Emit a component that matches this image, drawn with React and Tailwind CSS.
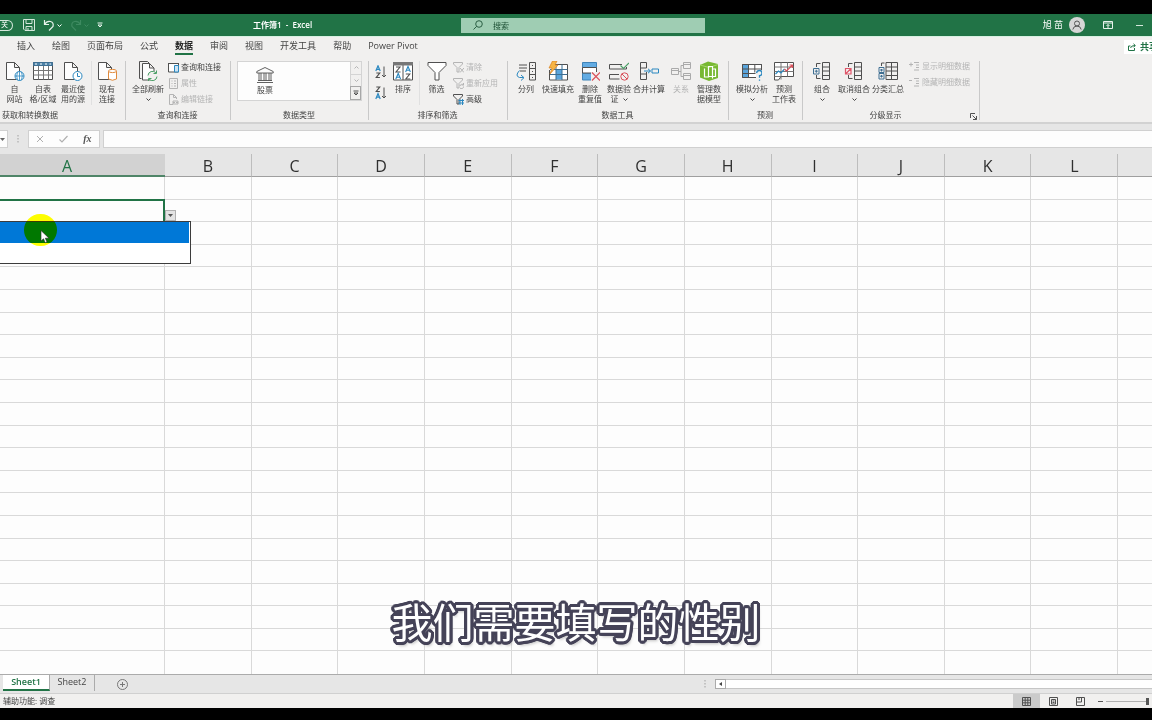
import React, { useState } from "react";
import clsx from "clsx";

const TABS = ["插入", "绘图", "页面布局", "公式", "数据", "审阅", "视图", "开发工具", "帮助", "Power Pivot"];
const COLUMNS = ["A", "B", "C", "D", "E", "F", "G", "H", "I", "J", "K", "L", ""];
const ROWS = 22;
const ROW_GRID = "grid grid-cols-[165px_repeat(11,87fr)_34fr]";

const INK = "#505050";
const BLUE = "#2b88c0";
const PALE = "#b4b4b4";

function Svg({ children, className = "w-5 h-5", box = "0 0 20 20", color = INK }) {
  return (
    <svg viewBox={box} className={clsx("shrink-0", className)} fill="none" stroke={color} strokeWidth="1" aria-hidden="true">
      {children}
    </svg>
  );
}

const Page = () => <path d="M1.5 1.5h8l5 5v12h-13z M9.5 1.5v5h5" fill="#fdfdfd" />;

const icons = {
  web: (
    <Svg>
      <Page />
      <circle cx="14.5" cy="15" r="4.5" fill="#fff" stroke={BLUE} />
      <path d="M10 15h9M14.5 10.5v9M12.5 11q-1.5 4 0 8M16.5 11q1.5 4 0 8" stroke={BLUE} strokeWidth=".8" />
    </Svg>
  ),
  table: (
    <Svg>
      <path d="M.5 1.5h19v17H.5z" fill="#fff" />
      <path d="M.5 1.5h19v3H.5z" fill="#4d83a8" stroke="#3f6f92" />
      <path d="M.5 9.5h19M.5 14h19M5.5 5v13.5M10.5 5v13.5M15.5 5v13.5" stroke="#777" />
      <path d="M2 3h2M7 3h2M12 3h2M16.5 3h1.5" stroke="#fff" />
    </Svg>
  ),
  recent: (
    <Svg>
      <Page />
      <circle cx="14.5" cy="15" r="4.5" fill="#fff" stroke={BLUE} />
      <path d="M14.5 12v3.5h2.5" stroke={BLUE} />
    </Svg>
  ),
  existing: (
    <Svg>
      <Page />
      <path d="M11.5 10v8q4 2.5 8 0v-8" fill="#fff" stroke="#e08a3c" />
      <ellipse cx="15.5" cy="10" rx="4" ry="1.6" fill="#fff" stroke="#e08a3c" />
    </Svg>
  ),
  refresh: (
    <Svg>
      <path d="M3.5 17.5h-2v-17h8l2 2" />
      <path d="M4.5 2.5h7l4.5 4.5v12h-11.5z M11.5 2.5v4.5h4.5" fill="#fdfdfd" />
      <circle cx="14.5" cy="15" r="5" fill="#f1f0ef" stroke="none" />
      <path d="M10 14.5a4.5 4.5 0 0 1 8-2.5M19 15.5a4.5 4.5 0 0 1-8 2.5M18.5 9.5v3h-3M10.5 20v-2.5h3" stroke="#4ba067" />
    </Svg>
  ),
  sort: (
    <Svg>
      <path d="M.5 1.5h19v17.5H.5zM10 4v15" fill="#fff" />
      <path d="M.5 1.5h19v2.5H.5z" fill="#777" stroke="#777" />
      <path d="M3 6h4l-4 5h4.5M12.8 13h4l-4 5h4.5" strokeWidth="1.1" />
      <path d="M2.8 18l2.4-5.5 2.4 5.5M3.7 16.3h3M12.6 11l2.4-5.5 2.4 5.5M13.5 9.3h3" stroke={BLUE} strokeWidth="1.1" />
    </Svg>
  ),
  filter: (
    <Svg>
      <path d="M1 1.5h18v3l-7 7v7.5H8v-7.5l-7-7z" fill="#fff" />
    </Svg>
  ),
  split: (
    <Svg>
      <path d="M3 4h8M3 7h8M4 10h6" />
      <path d="M13.5 1.5h6v17.5h-6zM13.5 7.5h6M13.5 13.5h6M16 4.5h1M16 10.5h1M16 16.5h1" />
      <path d="M3.5 9.5q-5 5.5 0 7h4M5 14l3 2.7-3 2.8" stroke={BLUE} />
    </Svg>
  ),
  flash: (
    <Svg>
      <path d="M4 3.5h15.5v15.5H1.5V9" fill="#fff" />
      <path d="M8 8h6v10.5H8z" fill="#5aa5dc" stroke="none" />
      <path d="M8 3.5v15.5M14 3.5v15.5M2 8.5h17.5M2 13.5h17.5" stroke="#3f6f92" />
      <path d="M4.5 0h4.5L7 4h3l-8 9 2-6H1z" fill="#f6b545" stroke="#d98020" strokeWidth=".7" />
    </Svg>
  ),
  dedupe: (
    <Svg>
      <path d="M2.5 1.5h14v5h-14zM2.5 12h14v7h-14z" fill="#63ace3" stroke="#3f83b8" />
      <path d="M2.5 6.5h14v5.500h-14z" fill="#fff" />
      <path d="M11 11h9v9h-9z" fill="#f1f0ef" stroke="none" />
      <path d="M12 11.500l8 8M20 11.500l-8 8" stroke="#d9505a" strokeWidth="1.2" />
    </Svg>
  ),
  validate: (
    <Svg>
      <path d="M13 3.5H.5v4.5h17v-2M10 13.5H.5V18h10" />
      <path d="M11.5 4.5l3 3L20 2" stroke="#4ba067" strokeWidth="1.2" />
      <circle cx="15.5" cy="15.5" r="3.7" stroke="#d9505a" />
      <path d="M13 13l5 5" stroke="#d9505a" />
    </Svg>
  ),
  consolidate: (
    <Svg>
      <path d="M1.5 1.5h6v5.5h-6zM1.5 7v11.5h6V13h-6M7.5 13V11" />
      <path d="M5 10h6.5M9 7.8l2.5 2.2L9 12.2M13 8h6.5v4H13z" stroke={BLUE} />
    </Svg>
  ),
  relation: (
    <Svg color="#aaa">
      <path d="M.5 7.5h7v6h-7zM12.5 1.5h7v6h-7zM12.5 12.5h7v6h-7zM7.5 10.5H10M12.5 4.5H10v11h2.5M.5 9.5h7M12.5 3.5h7M12.5 14.5h7" />
    </Svg>
  ),
  model: (
    <Svg>
      <path d="M1 4l8-3.500 10 2.500v14L10 20l-9-3.500z" fill="#78b833" stroke="none" />
      <path d="M1 4l9 2.5L19 3.5" stroke="#a6d86c" />
      <path d="M5.500 7.500v8.500h4V5.500h4v12M13.500 8h3v7.500H9.500" stroke="#fff" strokeWidth="1.2" />
    </Svg>
  ),
  whatif: (
    <Svg>
      <path d="M.5 3.5h19v13H.5z" fill="#fff" />
      <path d="M.5 3.5h6v13h-6z" fill="#5aa5dc" stroke="none" />
      <path d="M.5 3.5h19M.5 3.5v13h12M6.5 3.5v13M12.8 3.5v8M.5 8h19M.5 12.5h13M19.5 3.5v6" />
      <path d="M14 9h6.5v11H14z" fill="#f1f0ef" stroke="none" />
      <path d="M14.5 12q.5-2.5 3-2.5t2.5 2.5-2.5 2.7v2M17.5 18.500v1.3" stroke={BLUE} strokeWidth="1.3" />
    </Svg>
  ),
  forecast: (
    <Svg>
      <path d="M.5 1.5h19v14H7l-2.5 3.500H.5z" fill="#fff" />
      <path d="M.5 6h19M.5 10.5h19M7 1.5v14M13.5 1.5v14M.5 15.5H7v3" stroke="#777" />
      <path d="M1.5 13l3-3 2.5 2 3.5-4" stroke={BLUE} strokeWidth="1.2" />
      <path d="M10.5 8l2 2L18.5 4M15.5 4h3v3" stroke="#d9505a" strokeWidth="1.2" />
    </Svg>
  ),
  group: (
    <Svg>
      <path d="M10.5 1.5h7v17h-7zM10.5 6h7M10.5 10h7M10.5 14.5h7M8.5 2.5H4.5V6M4.5 14v3.5h4" />
      <path d="M1.5 7.5H7V13H1.500zM2.800 10.200h3M4.300 8.800v3" stroke="#3f6f92" />
    </Svg>
  ),
  ungroup: (
    <Svg>
      <path d="M10.5 1.5h7v17h-7zM10.5 6h7M10.5 10h7M10.5 14.5h7M8.5 2.5H4.5V6M4.5 14v3.5h4" />
      <path d="M1.5 7.5H7V13H1.5zM1.5 13L7 7.5" stroke="#e0566a" strokeWidth="1.2" />
    </Svg>
  ),
  subtotal: (
    <Svg>
      <path d="M8 1.5h11.5v17H8zM8 6h11.5M8 10h11.5M8 14.5h11.5M13.5 1.5v17M6.5 2h-3v3" />
      <path d="M1 6.5h5v5H1zM1 12.5h5v5.5H1zM2 9h3M3.5 8v2.5M2 15.200h3M3.5 14v2.5" stroke="#3f6f92" />
    </Svg>
  ),
};

const small = {
  queries: (
    <Svg box="0 0 11 11" className="w-[11px] h-[11px]">
      <path d="M.5 1.5h10v8.5H.5z" fill="#fff" />
      <path d="M0 1.500h11" />
      <path d="M6.5 3.500h4v6.500h-4z" fill="#cfe4f3" stroke={BLUE} />
    </Svg>
  ),
  props: (
    <Svg box="0 0 11 11" className="w-[11px] h-[11px]" color={PALE}>
      <path d="M1.5.5h8v10h-8zM3.5 3h1M6 3h2M3.5 5.5h1M6 5.5h2M3.5 8h1M6 8h2" />
    </Svg>
  ),
  links: (
    <Svg box="0 0 11 11" className="w-[11px] h-[11px]" color={PALE}>
      <path d="M5 10.5H1.5V.5h4l3 3V5M5.5.5v3h3" />
      <path d="M5 8.5h2M8 8.5h2M5 7h5v3H5z" />
    </Svg>
  ),
  clear: (
    <Svg box="0 0 11 11" className="w-[11px] h-[11px]" color={PALE}>
      <path d="M.5.5h9v1.5L6 5.5V10H4V5.5L.5 2zM7 6l4 4.5M11 6l-4 4.5" />
    </Svg>
  ),
  reapply: (
    <Svg box="0 0 11 11" className="w-[11px] h-[11px]" color={PALE}>
      <path d="M.5.5h9v1.5L6 5.5V10H4V5.5L.5 2zM7 8a2 2 0 0 1 3.5-1M10.5 8.5A2 2 0 0 1 7 10M10.5 5v2H8.5" />
    </Svg>
  ),
  advanced: (
    <Svg box="0 0 11 11" className="w-[11px] h-[11px]">
      <path d="M.5.5h9v1.5L6 5.5V10H4V5.5L.5 2z" />
      <path d="M5.5 6.5h5.5M5.5 9h5.5M7 5v6M9.5 5v6" stroke={BLUE} />
    </Svg>
  ),
  showDetail: (
    <Svg box="0 0 11 11" className="w-[11px] h-[11px]" color={PALE}>
      <path d="M0 3.5h4M2 1.5v4M5 1.5h5M7 4h3M7 6.5h3M5 9h5" />
    </Svg>
  ),
  hideDetail: (
    <Svg box="0 0 11 11" className="w-[11px] h-[11px]" color={PALE}>
      <path d="M0 3.5h3M5 1.5h5M7 4h3M7 6.5h3M5 9h5" />
    </Svg>
  ),
};

function Chevron({ className = "w-[5px] h-[3px]" }) {
  return (
    <svg viewBox="0 0 5 3" className={clsx("shrink-0 inline-block", className)} fill="none" stroke="currentColor" aria-hidden="true">
      <path d="M.5.5l2 2 2-2" />
    </svg>
  );
}

function BigButton({ icon, lines, width = "w-[30px]", menu, muted }) {
  return (
    <button className={clsx("flex flex-col items-center gap-[3px] pt-1 shrink-0 leading-[10px] whitespace-nowrap", width, muted && "text-[#b4b4b4]")}>
      {icons[icon]}
      <span className="flex flex-col items-center">
        {lines.map((line, i) => (
          <span key={line} className="flex items-center gap-1 h-[10px]">
            {line}
            {menu && i === 1 && <Chevron />}
          </span>
        ))}
        {menu && lines.length === 1 && (
          <span className="flex items-center h-[10px]">
            <Chevron />
          </span>
        )}
      </span>
    </button>
  );
}

function SmallButton({ icon, children, muted }) {
  return (
    <button className={clsx("flex items-center gap-[2px] h-4 whitespace-nowrap", muted && "text-[#b4b4b4]")}>
      {small[icon]}
      {children}
    </button>
  );
}

function Group({ title, width, pad, titlePad, launcher, children }) {
  return (
    <section className={clsx("flex flex-col shrink-0 relative", width)}>
      <div className={clsx("flex flex-1 items-start", pad)}>{children}</div>
      <h2 className={clsx("h-[14px] leading-[14px] whitespace-nowrap", titlePad || "text-center pr-[2px]")}>{title}</h2>
      {launcher && (
        <button aria-label="分级显示设置" className="absolute right-[3px] bottom-[2px]">
          <Svg box="0 0 7 7" className="w-[7px] h-[7px]">
            <path d="M.5 5V.5H5M2.5 2.5l4 4M6.5 3v3.5H3" />
          </Svg>
        </button>
      )}
      <span className="absolute right-0 top-1 bottom-[2px] w-px bg-[#c9c9c9]" />
    </section>
  );
}

function SortButton({ down }) {
  return (
    <button aria-label={down ? "降序" : "升序"}>
      <Svg box="0 0 12 14" className="w-3 h-[14px]">
        <path d={down ? "M1.3 1h3.4l-3.4 4.5h3.6" : "M1.3 8h3.4l-3.4 4.5h3.6"} strokeWidth="1.2" />
        <path d={down ? "M.8 13L3 7.5 5.2 13M1.5 11.2h3" : "M.8 6L3 .8 5.2 6M1.5 4.3h3"} stroke={BLUE} strokeWidth="1.2" />
        <path d="M9 1.5v10.5M7 10l2 2 2-2" />
      </Svg>
    </button>
  );
}

function TitleBar() {
  return (
    <header className="grid grid-cols-[461fr_244px_447fr] items-center h-[22px] shrink-0 bg-[#217346] text-white">
      <div className="relative flex items-center h-full">
        <button className="w-[13px] h-[11px] flex items-center justify-end pr-1 rounded-r-full border border-l-0 border-[#d5e8dc] text-[7px]">
          关
        </button>
        <button aria-label="保存" className="ml-[10px]">
          <Svg box="0 0 12 12" className="w-3 h-3" color="#d5e8dc">
            <path d="M.5.5h11v11H2l-1.5-1.5zM3 .5v4h6v-4M3 11.5v-4h6v4M5 9v2" />
          </Svg>
        </button>
        <button aria-label="撤消" className="ml-2 flex items-center gap-[2px]">
          <Svg box="0 0 12 12" className="w-3 h-3" color="#e8f3ec">
            <path d="M1.5 1v4.5H6M1.5 5.5Q4 1.5 7.5 2.5T10 7.5L6 11.5" strokeWidth="1.2" />
          </Svg>
          <Chevron />
        </button>
        <button aria-label="恢复" className="ml-2 flex items-center gap-[2px] text-[#3d8a60]">
          <Svg box="0 0 12 12" className="w-3 h-3" color="#3d8a60">
            <path d="M10.5 1v4.5H6M10.5 5.5Q8 1.5 4.5 2.5T2 7.5L6 11.5" strokeWidth="1.2" />
          </Svg>
          <Chevron />
        </button>
        <button aria-label="自定义快速访问工具栏" className="ml-2">
          <Svg box="0 0 6 6" className="w-[6px] h-[6px]" color="#e8f3ec">
            <path d="M.5 1h5M1 3h4L3 5z" />
          </Svg>
        </button>
        <h1 className="absolute left-[253px] text-[8px] leading-[10px] font-semibold whitespace-pre">工作簿1  -  Excel</h1>
      </div>
      <label className="flex items-center h-[15px] pl-3 bg-[#9fcdb3] text-[#1c4f34]">
        <Svg box="0 0 10 10" className="w-[10px] h-[10px]" color="#2c5f45">
          <circle cx="6" cy="4" r="3.3" />
          <path d="M3.7 6.3L.5 9.5" />
        </Svg>
        <input aria-label="搜索" placeholder="搜索" className="ml-[10px] w-full h-[15px] text-[8px] bg-transparent outline-none placeholder:text-[#1c4f34]" />
      </label>
      <div className="flex items-center justify-end pr-[9px]">
        <span className="text-[9px] leading-[12px]">旭 苗</span>
        <button aria-label="帐户" className="ml-[6px]">
          <Svg box="0 0 16 16" className="w-4 h-4" color="#555">
            <circle cx="8" cy="8" r="8" fill="#d6d6d6" stroke="none" />
            <circle cx="8" cy="6.5" r="2.5" />
            <path d="M3.8 12.5q.7-3.5 4.2-3.5t4.2 3.5" />
          </Svg>
        </button>
        <button aria-label="功能区显示选项" className="ml-[18px]">
          <Svg box="0 0 10 8" className="w-[10px] h-2" color="#e8f3ec">
            <path d="M.5.5h9v7h-9zM.5 2h9M5 7V3.5M3.5 5L5 3.5 6.5 5" />
          </Svg>
        </button>
        <button aria-label="最小化" className="ml-[23px] w-[7px] h-2 flex items-center">
          <span className="w-full h-px bg-[#d5e8dc]" />
        </button>
      </div>
    </header>
  );
}

function TabBar({ active, onSelect }) {
  return (
    <nav className="flex items-center h-[21px] shrink-0 pl-[17px] gap-[17px] text-[9px] leading-[14px] border-t border-[#d8f0e2]">
      {TABS.map((tab) => (
        <button
          key={tab}
          onClick={() => onSelect(tab)}
          className={clsx(
            "h-4 border-b-2 whitespace-nowrap",
            active === tab ? "border-[#217346] text-[#262626] font-bold" : "border-transparent"
          )}
        >
          {tab}
        </button>
      ))}
      <button className="ml-auto w-7 h-[14px] flex items-center gap-1 pl-1 bg-white text-[#217346] font-bold overflow-hidden whitespace-nowrap">
        <Svg box="0 0 8 8" className="w-2 h-2" color="#217346">
          <path d="M2.5 3H.5v4.5h6V5M2.5 5Q3 2.5 7 2.5M5.5.8L7.3 2.5 5.5 4.3" />
        </Svg>
        共享
      </button>
    </nav>
  );
}

function Ribbon() {
  return (
    <div className="flex h-[65px] shrink-0 text-[8px]">
      <Group title="获取和转换数据" width="w-[126px]" pad="pl-px" titlePad="pl-[2px]">
        <BigButton icon="web" lines={["自", "网站"]} width="w-[27px]" />
        <BigButton icon="table" lines={["自表", "格/区域"]} />
        <BigButton icon="recent" lines={["最近使", "用的源"]} />
        <span className="w-px h-11 mt-1 ml-[3px] bg-[#e0e0e0]" />
        <BigButton icon="existing" lines={["现有", "连接"]} />
      </Group>
      <Group title="查询和连接" width="w-[105px]" pad="pl-[3px]">
        <BigButton icon="refresh" lines={["全部刷新"]} width="w-[38px]" menu />
        <div className="flex flex-col pt-[2px] pl-px">
          <SmallButton icon="queries">查询和连接</SmallButton>
          <SmallButton icon="props" muted>属性</SmallButton>
          <SmallButton icon="links" muted>编辑链接</SmallButton>
        </div>
      </Group>
      <Group title="数据类型" width="w-[138px]" pad="pl-[6px] pt-1">
        <div className="flex w-[125px] h-10 bg-[#fdfdfd] border border-[#d4d4d4]">
          <button className="flex flex-col items-center gap-px w-[54px] pt-1 leading-[10px]">
            <Svg box="0 0 18 18" className="w-[18px] h-[18px]">
              <path d="M.8 5.5L9 1.5l8.2 4v1.5H.8zM1 16.5h16M2 14.5h14M3 7v7.5M5 7v7.5M8 7v7.5M10 7v7.5M13 7v7.5M15 7v7.5" strokeWidth=".9" />
            </Svg>
            股票
          </button>
          <div className="ml-auto w-[11px] flex flex-col bg-[#f1f0ef] text-[#b4b4b4]">
            <button aria-label="上一行" className="flex-1 flex items-center justify-center border-l border-b border-[#d4d4d4]">
              <Chevron className="w-[5px] h-[3px] rotate-180" />
            </button>
            <button aria-label="下一行" className="flex-1 flex items-center justify-center border-l border-[#d4d4d4]">
              <Chevron />
            </button>
            <button aria-label="其他" className="flex-1 flex items-center justify-center border border-[#a8a8a8]">
              <Svg box="0 0 6 6" className="w-[6px] h-[6px]">
                <path d="M.5 1h5M1 3h4L3 5z" />
              </Svg>
            </button>
          </div>
        </div>
      </Group>
      <Group title="排序和筛选" width="w-[139px]" pad="pl-[6px]">
        <div className="flex flex-col gap-[7px] pt-2">
          <SortButton />
          <SortButton down />
        </div>
        <BigButton icon="sort" lines={["排序"]} width="w-8" />
        <span className="w-px h-11 mt-1 bg-[#e0e0e0]" />
        <BigButton icon="filter" lines={["筛选"]} width="w-[33px]" />
        <div className="flex flex-col pt-[2px]">
          <SmallButton icon="clear" muted>清除</SmallButton>
          <SmallButton icon="reapply" muted>重新应用</SmallButton>
          <SmallButton icon="advanced">高级</SmallButton>
        </div>
      </Group>
      <Group title="数据工具" width="w-[221px]" pad="pl-[2px]">
        <BigButton icon="split" lines={["分列"]} width="w-8" />
        <BigButton icon="flash" lines={["快速填充"]} width="w-8" />
        <BigButton icon="dedupe" lines={["删除", "重复值"]} width="w-8" />
        <BigButton icon="validate" lines={["数据验", "证"]} width="w-[26px]" menu />
        <BigButton icon="consolidate" lines={["合并计算"]} width="w-[34px]" />
        <BigButton icon="relation" lines={["关系"]} muted />
        <BigButton icon="model" lines={["管理数", "据模型"]} width="w-[26px]" />
      </Group>
      <Group title="预测" width="w-[74px]" pad="pl-[6px]">
        <BigButton icon="whatif" lines={["模拟分析"]} width="w-[34px]" menu />
        <BigButton icon="forecast" lines={["预测", "工作表"]} />
      </Group>
      <Group title="分级显示" width="w-[177px]" pad="pl-1" titlePad="text-center pr-3" launcher>
        <BigButton icon="group" lines={["组合"]} menu />
        <BigButton icon="ungroup" lines={["取消组合"]} width="w-[34px]" menu />
        <BigButton icon="subtotal" lines={["分类汇总"]} width="w-[34px]" />
        <div className="flex flex-col pt-px pl-1">
          <SmallButton icon="showDetail" muted>显示明细数据</SmallButton>
          <SmallButton icon="hideDetail" muted>隐藏明细数据</SmallButton>
        </div>
      </Group>
    </div>
  );
}

function Dots() {
  return (
    <Svg box="0 0 2 8" className="w-[2px] h-2" color="#a0a0a0">
      <path d="M1 0v8" strokeDasharray="1.5 1.5" />
    </Svg>
  );
}

function FormulaBar() {
  return (
    <div className="flex items-center h-8 shrink-0 bg-[#e6e6e6] border-t-2 border-[#d2d2d2]">
      <button aria-label="名称框" className="w-2 h-[18px] flex items-center bg-[#fdfdfd] border border-l-0 border-[#d0d0d0]">
        <svg viewBox="0 0 5 3" className="w-[5px] h-[3px]" fill="#666" aria-hidden="true">
          <path d="M0 0h5L2.500 3z" />
        </svg>
      </button>
      <span className="w-5 flex justify-center">
        <Dots />
      </span>
      <div className="flex items-center justify-around w-[72px] h-[18px] bg-[#fdfdfd] border border-[#d0d0d0]">
        <button aria-label="取消">
          <Svg box="0 0 8 8" className="w-2 h-2" color="#b0b0b0">
            <path d="M1 1l6 6M7 1L1 7" />
          </Svg>
        </button>
        <button aria-label="输入">
          <Svg box="0 0 9 8" className="w-[9px] h-2" color="#b0b0b0">
            <path d="M.5 4.5L3 7l5.5-6" strokeWidth="1.2" />
          </Svg>
        </button>
        <button className="font-['Liberation_Serif',serif] italic font-bold text-[10px] leading-[12px] text-[#555]">fx</button>
      </div>
      <input aria-label="编辑栏" className="flex-1 min-w-0 ml-[3px] h-[18px] px-2 text-[10px] bg-[#fdfdfd] border border-r-0 border-[#d0d0d0] outline-none" />
    </div>
  );
}

function ListCell() {
  return (
    <td className="relative border-b border-[#d9d9d9]">
      <span className="absolute -top-px right-0 bottom-0 left-0 border-t-2 border-r-2 border-[#217346]" />
      <button aria-label="打开下拉列表" className="absolute left-full bottom-0 z-10 w-[11px] h-[11px] flex items-center justify-center bg-[#e3e3e3] border border-[#b0b0b0]">
        <svg viewBox="0 0 5 3" className="w-[5px] h-[3px]" fill="#555" aria-hidden="true">
          <path d="M0 0h5L2.500 3z" />
        </svg>
      </button>
      <ul role="listbox" aria-label="性别" className="absolute left-0 top-full z-20 w-[191px] h-[43px] flex flex-col pr-px bg-white border border-l-0 border-[#3c3c3c]">
        <li role="option" aria-selected="true" className="flex-1 bg-[#0078d7]" />
        <li role="option" aria-selected="false" className="flex-1" />
      </ul>
    </td>
  );
}

function Pointer() {
  return (
    <>
      <span className="absolute left-6 top-[60px] z-30 w-[33px] h-8 rounded-full bg-[#ffff00] mix-blend-multiply" />
      <svg viewBox="0 0 10 14" className="absolute left-10 top-[76px] z-30 w-[10px] h-[14px]" fill="#fff" stroke="#222" strokeWidth=".6" aria-hidden="true">
        <path d="M1 .5v10.5l2.5-2.2 1.7 4 1.8-.8-1.7-3.8H9z" />
      </svg>
    </>
  );
}

function Sheet() {
  return (
    <main className="relative flex-1 min-h-0 flex flex-col">
      <table className="flex-1 min-h-0 flex flex-col">
        <thead className="block h-[23px] shrink-0">
          <tr className={clsx(ROW_GRID, "h-full")}>
            {COLUMNS.map((name, i) => (
              <th
                key={i}
                className={clsx(
                  "text-[16px] leading-[25px] font-normal overflow-hidden",
                  i === 0
                    ? "pr-[31px] bg-[#d2d2d2] text-[#217346] border-b-2 border-[#4f8568]"
                    : "bg-[#e6e6e6] text-[#303030] border-b border-b-[#9f9f9f]",
                  i < 12 && i > 0 && "border-r border-r-[#bdbdbd]"
                )}
              >
                {name}
              </th>
            ))}
          </tr>
        </thead>
        <tbody className="flex-1 min-h-0 flex flex-col bg-[#fdfdfd]">
          {Array.from({ length: ROWS }, (_, r) => (
            <tr key={r} className={clsx(ROW_GRID, "flex-1 min-h-0")}>
              {COLUMNS.map((_, c) =>
                r === 1 && c === 0 ? (
                  <ListCell key={c} />
                ) : (
                  <td key={c} className={clsx("border-[#d9d9d9]", c < 12 && "border-r", r < ROWS - 1 && "border-b")} />
                )
              )}
            </tr>
          ))}
        </tbody>
      </table>
      <Pointer />
      <p className="absolute inset-x-0 bottom-6 z-30 text-center text-[41px] leading-[56px] text-white [text-shadow:3px_0_#454358,-3px_0_#454358,0_3px_#454358,0_-3px_#454358,2px_2px_#454358,-2px_2px_#454358,2px_-2px_#454358,-2px_-2px_#454358,3px_1px_#454358,3px_-1px_#454358,-3px_1px_#454358,-3px_-1px_#454358,1px_3px_#454358,-1px_3px_#454358,1px_-3px_#454358,-1px_-3px_#454358,2px_4px_3px_#8888]">
        我们需要填写的性别
      </p>
    </main>
  );
}

function SheetTabs() {
  return (
    <div className="flex items-center h-[19px] shrink-0 pl-[3px] bg-[#e6e6e6] border-t border-[#ababab] text-[9px]">
      <button className="w-[47px] h-4 leading-[14px] self-start bg-white text-[#217346] font-semibold border-b-2 border-[#217346] border-r border-r-[#ababab]">
        Sheet1
      </button>
      <button className="w-[45px] h-4 leading-[14px] pb-[2px] self-start border-r border-[#ababab]">Sheet2</button>
      <button aria-label="新工作表" className="ml-[22px]">
        <Svg box="0 0 11 11" className="w-[11px] h-[11px]" color="#777">
          <circle cx="5.5" cy="5.5" r="5" />
          <path d="M5.5 3v5M3 5.5h5" />
        </Svg>
      </button>
      <div className="flex items-center ml-auto w-[39%] h-full pb-px">
        <span className="w-[11px]">
          <Dots />
        </span>
        <button aria-label="向左滚动" className="w-[11px] h-[10px] flex items-center justify-center bg-white border border-[#ababab]">
          <svg viewBox="0 0 3 4" className="w-[3px] h-1" fill="#444" aria-hidden="true">
            <path d="M3 0v4L0 2z" />
          </svg>
        </button>
        <span className="flex-1 h-[10px] bg-white border-y border-[#c6c6c6]" />
      </div>
    </div>
  );
}

function StatusBar() {
  return (
    <footer className="flex items-center h-[15px] shrink-0 pl-[3px] bg-[#f1f0ef] border-t border-[#d0d0d0] text-[8px] leading-[12px]">
      <span>辅助功能: 调查</span>
      <div className="flex items-center ml-auto h-full">
        <button aria-label="普通" className="w-[27px] h-full flex items-center justify-center bg-[#cbcbcb]">
          <Svg box="0 0 9 9" className="w-[9px] h-[9px]">
            <path d="M.5.5h8v8h-8zM3.2.5v8M5.8.5v8M.5 3.2h8M.5 5.8h8" />
          </Svg>
        </button>
        <button aria-label="页面布局" className="w-[27px] h-full flex items-center justify-center">
          <Svg box="0 0 9 9" className="w-[9px] h-[9px]">
            <path d="M.5.5h8v8h-8zM2.5 2.5h4v4.5h-4zM3.5 4h2M3.5 5.5h2" />
          </Svg>
        </button>
        <button aria-label="分页预览" className="w-[27px] h-full flex items-center justify-center">
          <Svg box="0 0 9 9" className="w-[9px] h-[9px]">
            <path d="M.5.5h8v8h-8zM.5 5h5V.5M3 .5V3" />
          </Svg>
        </button>
        <button aria-label="缩小" className="w-3 h-full flex items-center justify-center">
          <span className="w-[5px] h-px bg-[#555]" />
        </button>
        <input
          type="range"
          aria-label="缩放"
          defaultValue="100"
          className="appearance-none w-[43px] mr-[3px] h-px bg-[#b0b0b0] [&::-webkit-slider-thumb]:appearance-none [&::-webkit-slider-thumb]:w-[3px] [&::-webkit-slider-thumb]:h-[7px] [&::-webkit-slider-thumb]:bg-[#555]"
        />
      </div>
    </footer>
  );
}

export default function App() {
  const [tab, setTab] = useState("数据");

  return (
    <div className="h-screen flex flex-col overflow-hidden bg-black pt-[14px] pb-3 font-['Open_Sans','Noto_Sans_CJK_SC',sans-serif] text-[#444]">
      <TitleBar />
      <div className="shrink-0 bg-[#f1f0ef]">
        <TabBar active={tab} onSelect={setTab} />
        <Ribbon />
      </div>
      <FormulaBar />
      <Sheet />
      <SheetTabs />
      <StatusBar />
    </div>
  );
}
